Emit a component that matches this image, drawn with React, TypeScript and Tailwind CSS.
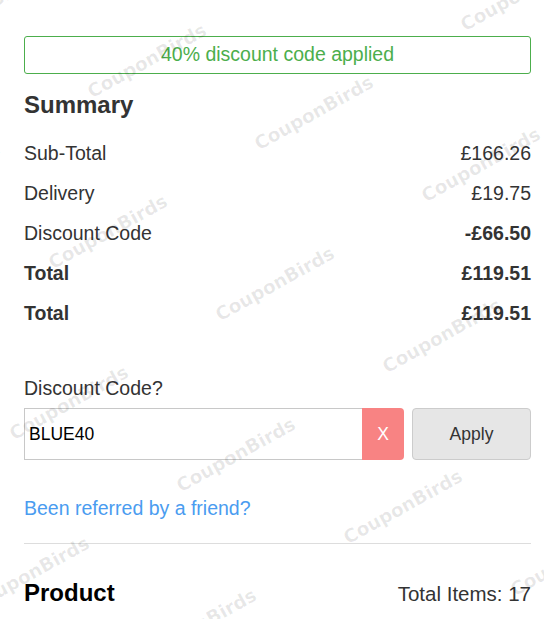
const rows = [
  { label: "Sub-Total", value: "£166.26", bold: false, boldValue: false },
  { label: "Delivery", value: "£19.75", bold: false, boldValue: false },
  { label: "Discount Code", value: "-£66.50", bold: false, boldValue: true },
  { label: "Total", value: "£119.51", bold: true, boldValue: true },
  { label: "Total", value: "£119.51", bold: true, boldValue: true },
];

// watermark lattice
const marks: { x: number; y: number }[] = [];
for (let i = -3; i <= 4; i++) {
  for (let j = -2; j <= 5; j++) {
    const x = 147 + i * 167 + j * -39;
    const y = 61 + i * 52 + j * 171;
    if (x > -90 && x < 640 && y > -50 && y < 670) marks.push({ x, y });
  }
}

function Watermark() {
  return (
    <div className="pointer-events-none absolute inset-0 overflow-hidden" aria-hidden="true">
      {marks.map((m, k) => (
        <span
          key={k}
          className="absolute -translate-x-1/2 -translate-y-1/2 -rotate-[29deg] whitespace-nowrap font-['DejaVu_Sans',sans-serif] text-[18.5px] font-bold text-black/[0.09]"
          style={{ left: m.x, top: m.y }}
        >
          CouponBirds
        </span>
      ))}
    </div>
  );
}

export default function App() {
  return (
    <div className="relative h-[619px] w-[544px] overflow-hidden bg-white font-['Liberation_Sans',Arial,sans-serif] text-[#333]">
      <div className="pl-6 pr-[13px] pt-9">
        <div className="flex h-[38px] items-center justify-center rounded-[3px] border border-[#4cae4c] text-[19.5px] text-[#4cae4c]">
          40% discount code applied
        </div>

        <h2 className="mt-4 text-[24px] font-bold leading-[30px]">Summary</h2>

        <div className="mt-[13px]">
          {rows.map((r, i) => (
            <div key={i} className="flex h-10 justify-between text-[19.5px] leading-[40px]">
              <span className={r.bold ? "font-bold" : ""}>{r.label}</span>
              <span className={r.boldValue ? "font-bold" : ""}>{r.value}</span>
            </div>
          ))}
        </div>

        <div className="mt-[43px] text-[19.5px] leading-6">Discount Code?</div>
        <div className="mt-2 flex h-[52px] gap-2">
          <div className="flex flex-1">
            <div className="flex flex-1 items-center border border-r-0 border-[#c8c8c8] pl-1 text-[17.5px] text-black">
              BLUE40
            </div>
            <button type="button" className="w-[42px] rounded-r-[4px] bg-[#f88383] text-[17.5px] text-white">
              X
            </button>
          </div>
          <button
            type="button"
            className="w-[119px] rounded-[4px] border border-[#cccccc] bg-[#e6e6e6] text-[17.5px] text-[#333]"
          >
            Apply
          </button>
        </div>

        <div className="mt-9 text-[19.5px] leading-6 text-[#4a9cf0]">Been referred by a friend?</div>

        <div className="mt-[23px] border-t border-[#dddddd]" />

        <div className="mt-[34px] flex items-baseline justify-between">
          <span className="text-[24px] font-bold leading-[30px] text-black">Product</span>
          <span className="text-[20.5px]">Total Items: 17</span>
        </div>
      </div>
      <Watermark />
    </div>
  );
}
